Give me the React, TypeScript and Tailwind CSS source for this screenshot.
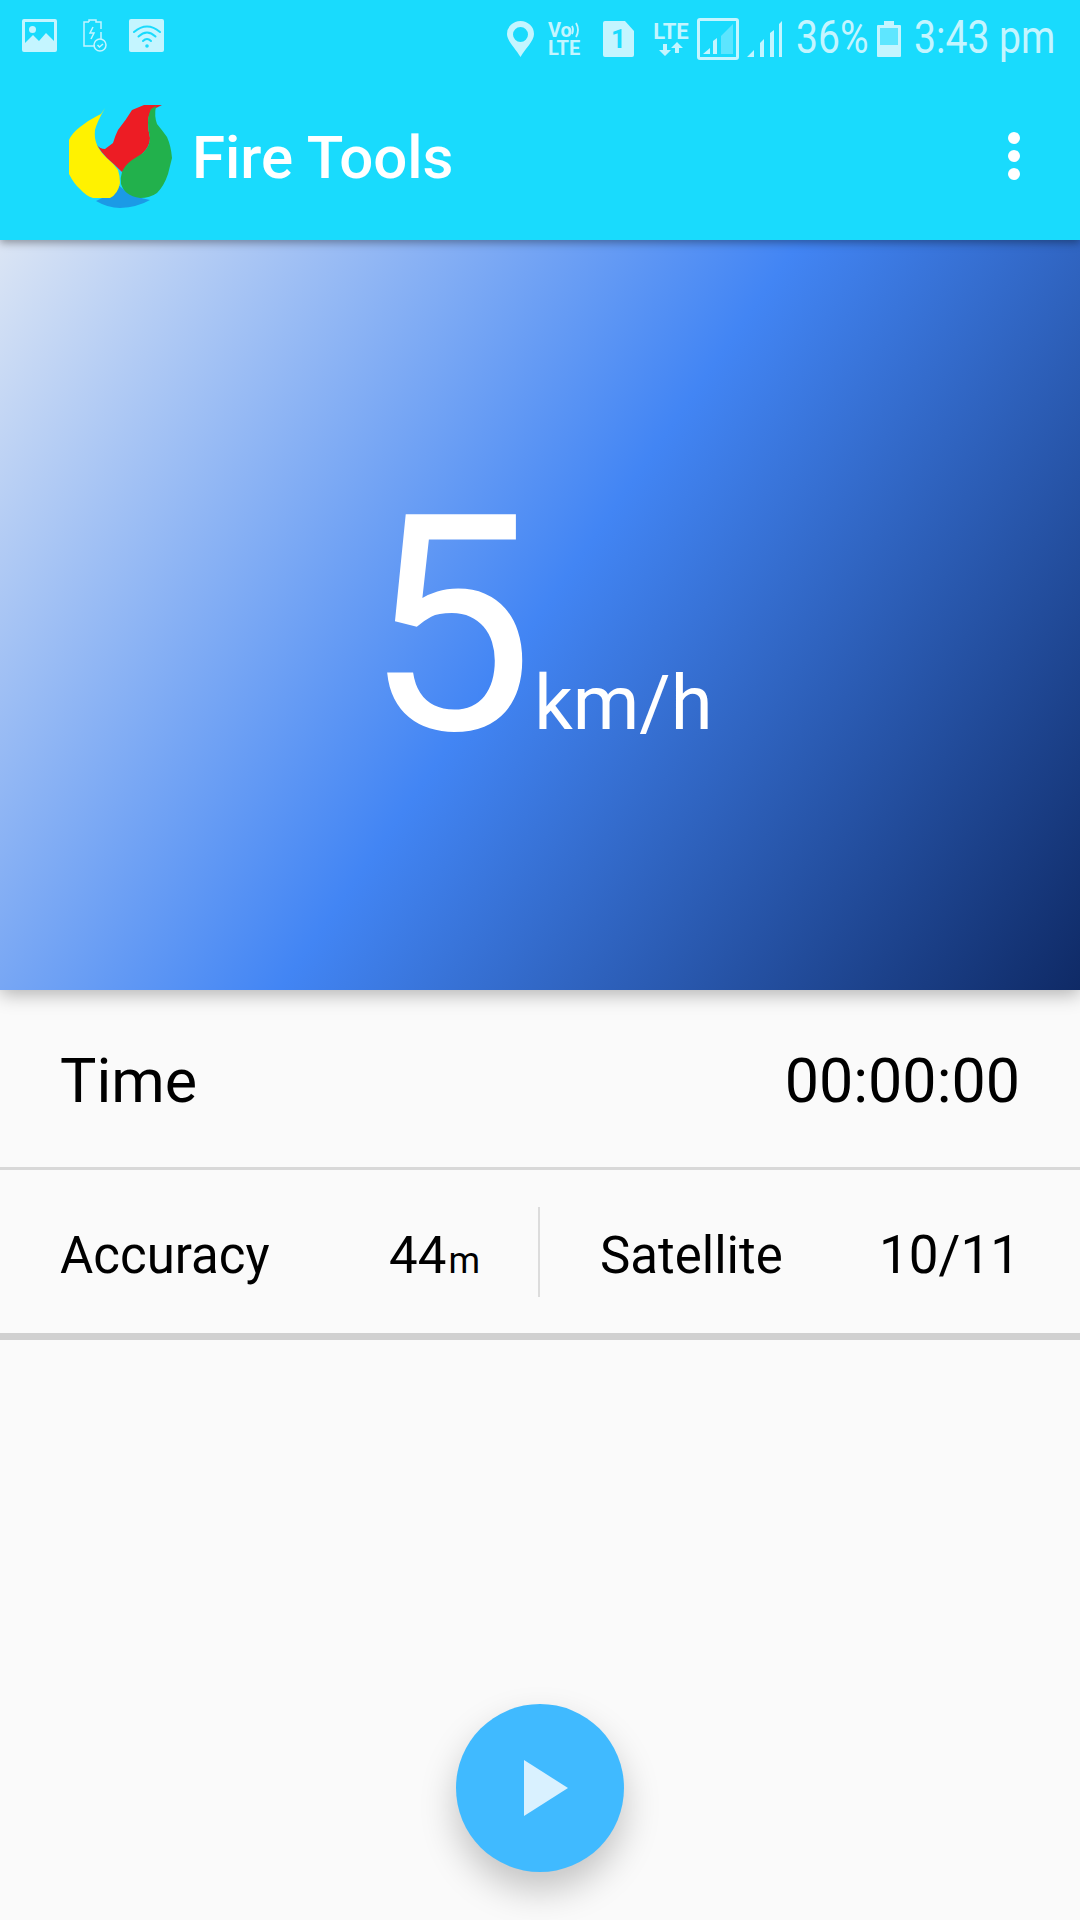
const roboto = "font-['Roboto',sans-serif]";

function Logo() {
  return (
    <svg width="120" height="112" viewBox="0 0 120 112" className="block">
      <path d="M58 85 Q48 96 36 101 Q48 108 60 108 Q78 107 90 100 Q76 97 67 92 Z" fill="#1b9ae6" />
      <path d="M45 8 L41 14 L37 16 Q27 21 20 27 Q12 33 9 40 L9 74 Q14 84 20 89 Q26 96 33 98 L50 98 Q58 94 60 83 Q60 76 58 70 Q53 63 47 58 Q40 52 37 45 Q34 38 35 30 Q37 22 45 8 Z" fill="#fff200" />
      <path d="M102 5 L84 5 L72 10 Q66 20 58 30 Q55 36 53 43 L45 49 Q40 49 37 45 Q41 52 47 58 Q55 65 62 72 L72 63 L83 53 Q90 46 90 38 Q88 30 88 23 Q88 15 92 10 Z" fill="#ed1c24" />
      <path d="M96 6 L91 9 Q88 15 88 23 Q88 30 90 38 Q90 46 83 53 L72 60 Q65 65 62 72 Q60 78 61 84 Q63 90 67 93 Q72 97 80 98 Q90 98 97 93 Q104 86 108 74 L112 58 Q111 46 107 37 Q102 30 97 24 Q94 16 96 6 Z" fill="#22b14c" />
    </svg>
  );
}

function ImageIcon() {
  return (
    <svg width="35" height="33" viewBox="0 0 35 33" className="block">
      <path fillRule="evenodd" d="M2 0H33a2 2 0 0 1 2 2V31a2 2 0 0 1-2 2H2a2 2 0 0 1-2-2V2a2 2 0 0 1 2-2ZM3 3V24L11 16L17 22L24 14L32 22V3Z" fill="#c4f5ff" />
      <circle cx="10.500" cy="10.500" r="3.500" fill="#c4f5ff" />
    </svg>
  );
}

function BatteryClockIcon() {
  return (
    <svg width="24" height="33" viewBox="0 0 24 33" fill="none" stroke="#c4f5ff" strokeWidth="1.500" className="block">
      <path d="M6 3V1H13V3H18V10" />
      <path d="M12 27H1V3H6" />
      <path d="M10 8L7 14H11L8 20" />
      <path d="M18 13V20" />
      <circle cx="17" cy="26" r="6" />
      <path d="M14.500 26L16.500 28L20 25" />
    </svg>
  );
}

function WifiBoxIcon() {
  return (
    <div className="flex h-[33px] w-[35px] items-center justify-center rounded-[2px] bg-[#c4f5ff]">
      <svg width="28" height="26" viewBox="0 0 28 26" fill="none" stroke="#19dbfd" strokeWidth="2" strokeLinecap="round">
        <path d="M1 9Q14 -2 27 9" />
        <path d="M5.500 13.500Q14 5.500 22.500 13.500" />
        <path d="M10 18Q14 14 18 18" />
        <circle cx="14" cy="23" r="1.800" fill="#19dbfd" stroke="none" />
      </svg>
    </div>
  );
}

function PinIcon() {
  return (
    <svg width="27" height="36" viewBox="0 0 27 36" className="block">
      <path fillRule="evenodd" d="M13.500 36C9 28 0 20 0 13A13.500 13 0 0 1 27 13C27 20 18 28 13.500 36ZM13.500 6A7.500 7.500 0 1 0 13.500 21A7.500 7.500 0 1 0 13.500 6Z" fill="#c4f5ff" />
    </svg>
  );
}

function VoLte() {
  return (
    <div className={`flex h-[36px] w-[36px] flex-col ${roboto} text-[20px] font-bold leading-[18px] whitespace-nowrap text-[#c4f5ff]`}>
      <div className="flex items-center">
        <span>Vo</span>
        <svg width="10" height="18" viewBox="0 0 10 18" fill="none" stroke="#c4f5ff" strokeWidth="1.800" className="-ml-[1px] block">
          <path d="M1 5Q3 9 1 13M5 2Q9 9 5 16" />
        </svg>
      </div>
      <span>LTE</span>
    </div>
  );
}

function Sim() {
  return (
    <div className="relative h-[36px] w-[31px]">
      <svg width="31" height="36" viewBox="0 0 31 36" className="block">
        <path d="M2 0H22L31 10V34a2 2 0 0 1-2 2H2a2 2 0 0 1-2-2V2a2 2 0 0 1 2-2Z" fill="#c4f5ff" />
      </svg>
      <span className={`absolute inset-0 flex items-center justify-center ${roboto} text-[26px] font-bold text-[#19dbfd]`}>1</span>
    </div>
  );
}

function LteArrows() {
  return (
    <div className="flex w-[38px] flex-col items-center">
      <span className={`${roboto} text-[22px] font-bold leading-[20px] text-[#c4f5ff]`}>LTE</span>
      <svg width="24" height="14" viewBox="0 0 24 14" className="block">
        <path d="M4 2H8V8H12L6 14L0 8H4ZM18 0L24 6H20V11H16V6H12Z" fill="#c4f5ff" />
      </svg>
    </div>
  );
}

function BoxSignal() {
  return (
    <div className="h-[42px] w-[42px] rounded-[3px] border-[3px] border-[#c4f5ff] p-[3px]">
      <svg width="30" height="30" viewBox="0 0 30 30" className="block">
        <path d="M0 30L7 24V30Z" fill="#c4f5ff" />
        <path d="M10 17L14 14V30H10Z" fill="#c4f5ff" />
        <path d="M18 12L30 0V30H18Z" fill="#c4f5ff" fillOpacity="0.4" />
      </svg>
    </div>
  );
}

function Signal() {
  return (
    <svg width="35" height="36" viewBox="0 0 35 36" className="block">
      <path d="M0 36L7 29V36ZM13 22L17 18V36H13ZM23 12L27 9V36H23ZM32 3L35 0V36H32Z" fill="#c4f5ff" />
    </svg>
  );
}

function BatteryIcon() {
  return (
    <svg width="24" height="36" viewBox="0 0 24 36" className="block">
      <path d="M7 0H17V4H23a1 1 0 0 1 1 1V35a1 1 0 0 1-1 1H1a1 1 0 0 1-1-1V5a1 1 0 0 1 1-1H7Z" fill="#c4f5ff" />
      <rect x="3" y="7" width="18" height="17" fill="#5ee6ff" />
    </svg>
  );
}

function StatusBar() {
  return (
    <div className="flex h-[72px] items-start justify-between pl-[22px] pr-[26px]">
      <div className="flex items-start gap-[26px] pt-[19px]">
        <ImageIcon />
        <BatteryClockIcon />
        <div className="-ml-[4px]"><WifiBoxIcon /></div>
      </div>
      <div className="flex items-center pt-[18px]">
        <PinIcon />
        <div className="ml-[14px]"><VoLte /></div>
        <div className="ml-[19px]"><Sim /></div>
        <div className="ml-[18px]"><LteArrows /></div>
        <div className="ml-[7px]"><BoxSignal /></div>
        <div className="ml-[8px]"><Signal /></div>
        <span className={`ml-[14px] w-[73px] pb-[4px] ${roboto} text-[46px] leading-[36px] whitespace-nowrap text-[#c4f5ff] origin-left scale-x-[0.85]`}>36%</span>
        <div className="ml-[8px]"><BatteryIcon /></div>
        <span className={`ml-[13px] w-[140px] pb-[4px] ${roboto} text-[46px] leading-[36px] whitespace-nowrap text-[#c4f5ff] origin-left scale-x-[0.85]`}>3:43 pm</span>
      </div>
    </div>
  );
}

function AppBar() {
  return (
    <div className="relative z-10 flex h-[168px] items-center pl-[60px] pr-[60px]">
      <Logo />
      <span className={`ml-[12px] pt-[3px] ${roboto} text-[60px] font-medium leading-none text-white`}>Fire Tools</span>
      <div className="ml-auto flex flex-col gap-[6px]">
        <span className="h-[12px] w-[12px] rounded-full bg-white" />
        <span className="h-[12px] w-[12px] rounded-full bg-white" />
        <span className="h-[12px] w-[12px] rounded-full bg-white" />
      </div>
    </div>
  );
}

function Hero() {
  return (
    <div className="flex h-[750px] items-center justify-center bg-[linear-gradient(124.8deg,#dbe5f4_0%,#4285f4_50%,#0f2a66_100%)] pt-[21px] pr-[3px] shadow-[0_4px_18px_rgba(0,0,0,0.3)]">
      <div className="flex items-baseline">
        <span className={`${roboto} text-[302px] leading-none text-white`}>5</span>
        <span className={`${roboto} text-[76px] leading-none text-white`}>km/h</span>
      </div>
    </div>
  );
}

export default function App() {
  return (
    <div className="flex h-[1920px] w-[1080px] flex-col overflow-hidden bg-[#fafafa]">
      <div className="relative z-10 bg-[#19dbfd] shadow-[0_3px_8px_rgba(0,0,0,0.35)]">
        <StatusBar />
        <AppBar />
      </div>
      <Hero />
      <div className={`flex h-[180px] items-center justify-between border-b-[3px] border-[#d8d8d8] px-[60px] pt-[5px] ${roboto} text-[61px] leading-none text-black`}>
        <span>Time</span>
        <span>00:00:00</span>
      </div>
      <div className={`flex h-[170px] items-center border-b-[7px] border-[#d0d0d0] ${roboto} text-[51px] leading-none text-black`}>
        <div className="flex flex-1 items-baseline justify-between pt-[7px] pl-[60px] pr-[58px]">
          <span>Accuracy</span>
          <span>44<span className="ml-[2px] text-[36px]">m</span></span>
        </div>
        <div className="h-[90px] w-[2px] bg-[#dcdcdc]" />
        <div className="flex flex-1 items-baseline justify-between pt-[7px] pl-[60px] pr-[60px]">
          <span>Satellite</span>
          <span className="text-[53px]">10/11</span>
        </div>
      </div>
      <div className="flex flex-1 items-end justify-center pb-[48px]">
        <div className="flex h-[168px] w-[168px] items-center justify-center rounded-full bg-[#40baff] shadow-[0_18px_36px_rgba(0,0,0,0.22)]">
          <svg width="44" height="56" viewBox="0 0 44 56" className="ml-[12px] block">
            <path d="M0 0L44 28L0 56Z" fill="#d9f1ff" />
          </svg>
        </div>
      </div>
    </div>
  );
}
